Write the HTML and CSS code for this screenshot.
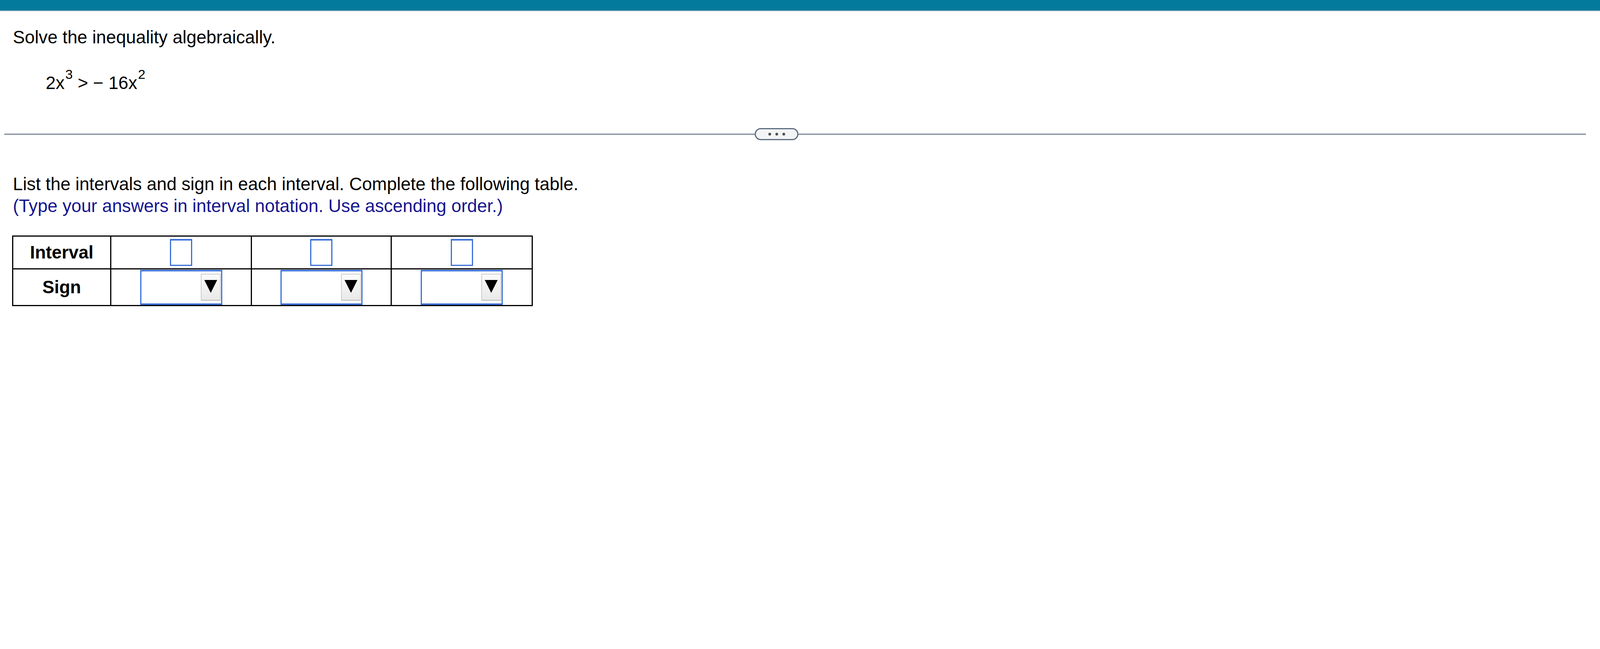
FILE: index.html
```html
<!DOCTYPE html>
<html lang="en">
<head>
<meta charset="utf-8">
<title>Solve the inequality</title>
<link rel="stylesheet" href="styles.css">
</head>
<body>
<header class="topbar"></header>
<main class="page">
  <section class="question">
    <p class="prompt">Solve the inequality algebraically.</p>
    <div class="equation">2x<sup>3</sup> &gt; − 16x<sup>2</sup></div>
  </section>

  <div class="divider">
    <span class="rule rule-left"></span>
    <span class="more-btn"><i></i><i></i><i></i></span>
    <span class="rule rule-right"></span>
  </div>

  <section class="answer">
    <p class="instr">List the intervals and sign in each interval. Complete the following table.</p>
    <p class="hint">(Type your answers in interval notation. Use ascending order.)</p>

    <div class="sign-table">
      <div class="cell head">Interval</div>
      <div class="cell"><span class="text-input"></span></div>
      <div class="cell"><span class="text-input"></span></div>
      <div class="cell"><span class="text-input"></span></div>

      <div class="cell head">Sign</div>
      <div class="cell"><span class="select"><span class="arrow"><svg viewBox="0 0 37 37" width="33" height="33"><polygon points="0,0 37,0 18.5,37" fill="#000"/></svg></span></span></div>
      <div class="cell"><span class="select"><span class="arrow"><svg viewBox="0 0 37 37" width="33" height="33"><polygon points="0,0 37,0 18.5,37" fill="#000"/></svg></span></span></div>
      <div class="cell"><span class="select"><span class="arrow"><svg viewBox="0 0 37 37" width="33" height="33"><polygon points="0,0 37,0 18.5,37" fill="#000"/></svg></span></span></div>
    </div>
  </section>
</main>
</body>
</html>
```

FILE: styles.css
```css
html, body {
  margin: 0;
  padding: 0;
  background: #ffffff;
}

body {
  font-family: "Liberation Sans", Arial, Helvetica, sans-serif;
  font-size: 45.7px;
  line-height: 55.5px;
  color: #000;
}

.topbar {
  height: 27px;
  background: #037a9b;
  border-bottom: 2px solid #b9c6d0;
}

.page {
  padding: 0 36px 0 11px;
}

.question,
.answer {
  padding-left: 22px;
}

.prompt {
  margin: 39px 0 0;
}

.equation {
  margin-top: 61px;
  padding-left: 84px;
  height: 55.5px;
}

.equation sup {
  font-size: 34px;
  line-height: 0;
  vertical-align: 26px;
  margin-left: 2px;
}

/* divider with ellipsis button */
.divider {
  margin-top: 88px;
  display: flex;
  align-items: center;
  height: 31px;
}

.rule {
  height: 3px;
  background: #8a93a3;
  border-bottom: 1px solid #c8cdd5;
}

.rule-left {
  flex: 0 0 1921px;
}

.rule-right {
  flex: 1 1 auto;
}

.more-btn {
  box-sizing: border-box;
  width: 112px;
  height: 31px;
  border: 3px solid #5d6d7e;
  border-radius: 16px;
  background: #f3f4f6;
  display: flex;
  align-items: center;
  justify-content: center;
  gap: 11px;
}

.more-btn i {
  width: 7px;
  height: 7px;
  border-radius: 50%;
  background: #4d4d4d;
}

.instr {
  margin: 85px 0 0;
}

.hint {
  margin: 0;
  color: #16168d;
}

/* table */
.sign-table {
  margin-top: 48px;
  margin-left: -2px;
  display: grid;
  grid-template-columns: 251px 360px 358px 361px;
  grid-template-rows: 84px 94px;
  width: max-content;
  border-left: 3px solid #000;
  border-top: 3px solid #000;
}

.cell {
  border-right: 3px solid #000;
  border-bottom: 3px solid #000;
  display: flex;
  align-items: center;
  justify-content: center;
}

.head {
  font-weight: bold;
}

.text-input {
  box-sizing: border-box;
  width: 57px;
  height: 69px;
  border: 3px solid #3a6fd6;
  border-top-width: 4px;
  background: #fff;
}

.select {
  box-sizing: border-box;
  width: 210px;
  height: 90px;
  border: 3px solid #3a6fd6;
  border-top-width: 4px;
  border-bottom-width: 4px;
  background: #fff;
  display: flex;
  align-items: center;
  justify-content: flex-end;
  padding-right: 1px;
}

.arrow {
  box-sizing: border-box;
  width: 51px;
  height: 69px;
  border: 2px solid #cdcdcd;
  border-bottom-color: #b5b5b5;
  background: linear-gradient(#fbfbfb, #e9e9e9);
  display: flex;
  align-items: center;
  justify-content: center;
  padding-bottom: 5px;
}

.arrow svg {
  display: block;
}
```
